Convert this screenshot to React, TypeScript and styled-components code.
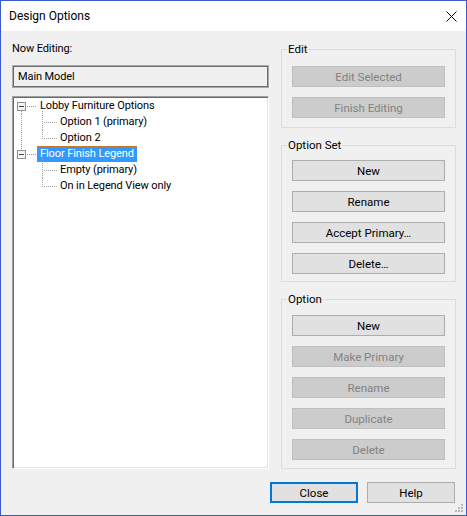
import React from 'react';
import styled, { createGlobalStyle } from 'styled-components';

const GlobalStyle = createGlobalStyle`
    html, body {
        margin: 0;
        padding: 0;
        background: #ffffff;
    }
`;

const Window = styled.div`
    position: relative;
    display: flex;
    flex-direction: column;
    width: 467px;
    height: 516px;
    box-sizing: border-box;
    border: 1px solid #3a5bcd;
    background: #f0f0f0;
    font-family: 'Segoe UI', Roboto, 'Liberation Sans', sans-serif;
    font-size: 11.5px;
    color: #000000;
`;

const TitleBar = styled.div`
    display: flex;
    flex-direction: row;
    justify-content: space-between;
    align-items: center;
    height: 30px;
    flex: none;
    padding-left: 8px;
    background: #ffffff;
`;

const Title = styled.span`
    font-size: 12px;
    line-height: 16px;
`;

const CloseBox = styled.div`
    display: flex;
    justify-content: center;
    align-items: center;
    width: 30px;
    height: 30px;
`;

const Body = styled.div`
    display: flex;
    flex-direction: column;
    padding: 10px 11px 0 11px;
`;

const Main = styled.div`
    display: grid;
    grid-template-columns: 257px 175px;
    column-gap: 12px;
`;

const LeftColumn = styled.div`
    display: flex;
    flex-direction: column;
    font-size: 11px;
    letter-spacing: -0.1px;
`;

const FieldLabel = styled.div`
    line-height: 16px;
    height: 16px;
`;

const ReadOnlyBox = styled.div`
    margin-top: 8px;
    height: 23px;
    box-sizing: border-box;
    border: 1px solid #a9a9a9;
    box-shadow: inset 0 0 0 1px #6d6d6d;
    padding: 0 4px 0 5px;
    display: flex;
    align-items: center;
    background: #f0f0f0;
`;

const TreeBox = styled.div`
    margin-top: 8px;
    height: 373px;
    box-sizing: border-box;
    border-style: solid;
    border-width: 1px;
    border-color: #a0a0a0 #ffffff #ffffff #a0a0a0;
    background: #ffffff;
    display: flex;
    flex-direction: column;
    box-shadow: inset 1px 1px 0 #696969, inset -1px -1px 0 #e3e3e3;
    padding: 1px;
`;

const TreeRow = styled.div`
    display: flex;
    flex-direction: row;
    align-items: center;
    height: 16px;
`;

const Lines = styled.svg`
    display: block;
    flex: none;
    overflow: visible;
`;

const NodeLabel = styled.span<{ $selected?: boolean }>`
    height: 16px;
    line-height: 14px;
    box-sizing: border-box;
    padding: 0 2px;
    white-space: nowrap;
    border: 1px dotted ${(props) => (props.$selected ? '#c8772c' : 'transparent')};
    background: ${(props) => (props.$selected ? '#3399ff' : 'transparent')};
    color: ${(props) => (props.$selected ? '#ffffff' : '#000000')};
`;

const RightColumn = styled.div`
    display: flex;
    flex-direction: column;
    gap: 9px;
`;

const Group = styled.fieldset`
    margin: 0;
    padding: 0;
    border: 1px solid #dcdcdc;
    min-width: 0;
`;

const Legend = styled.legend`
    margin-left: 5px;
    padding: 0 1px;
    line-height: 16px;
    height: 16px;
`;

const GroupContent = styled.div<{ $padTop: number; $padBottom: number }>`
    display: flex;
    flex-direction: column;
    gap: 10px;
    padding: ${(props) => props.$padTop}px 10px ${(props) => props.$padBottom}px 10px;
`;

const Button = styled.button<{ $focused?: boolean }>`
    height: 21px;
    box-sizing: border-box;
    margin: 0;
    padding: 0;
    font-family: inherit;
    font-size: 11.5px;
    line-height: 16px;
    background: #e1e1e1;
    border: 1px solid #adadad;
    color: #000000;
    border-radius: 0;

    &:disabled {
        background: #cccccc;
        border-color: #bfbfbf;
        color: #838383;
    }

    ${(props) => props.$focused && 'border: 2px solid #0078d7;'}
`;

const Footer = styled.div`
    display: flex;
    flex-direction: row;
    justify-content: flex-end;
    gap: 9px;
    margin-top: 13px;
`;

const FooterButton = styled(Button)`
    width: 88px;
`;

const Grip = styled.svg`
    position: absolute;
    right: 1px;
    bottom: 1px;
`;

const DOT = '#a0a0a0';

const RootLines = ({ first, last }: { first: boolean; last: boolean }) => (
    <Lines width={23} height={16} shapeRendering="crispEdges">
        {!first && <line x1={7.5} y1={0} x2={7.5} y2={4} stroke={DOT} strokeDasharray="1 1" />}
        {!last && <line x1={7.5} y1={13} x2={7.5} y2={16} stroke={DOT} strokeDasharray="1 1" />}
        <line x1={13} y1={8.5} x2={23} y2={8.5} stroke={DOT} strokeDasharray="1 1" />
        <rect x={3.5} y={4.5} width={8} height={8} fill="#f4f4f4" stroke="#8f8f8f" />
        <line x1={5} y1={8.5} x2={10} y2={8.5} stroke="#3a4656" />
    </Lines>
);

const ChildLines = ({ parentLast, first, last }: { parentLast: boolean; first: boolean; last: boolean }) => (
    <Lines width={43} height={16} shapeRendering="crispEdges">
        {!parentLast && <line x1={7.5} y1={0} x2={7.5} y2={16} stroke={DOT} strokeDasharray="1 1" />}
        <line x1={28.5} y1={first ? -3 : 0} x2={28.5} y2={last ? 9 : 16} stroke={DOT} strokeDasharray="1 1" />
        <line x1={30} y1={8.5} x2={43} y2={8.5} stroke={DOT} strokeDasharray="1 1" />
    </Lines>
);

const tree = [
    { label: 'Lobby Furniture Options', selected: false, children: ['Option 1 (primary)', 'Option 2'] },
    { label: 'Floor Finish Legend', selected: true, children: ['Empty (primary)', 'On in Legend View only'] },
];

const groups = [
    {
        title: 'Edit',
        padTop: 9,
        padBottom: 9,
        buttons: [
            { label: 'Edit Selected', enabled: false },
            { label: 'Finish Editing', enabled: false },
        ],
    },
    {
        title: 'Option Set',
        padTop: 7,
        padBottom: 7,
        buttons: [
            { label: 'New', enabled: true },
            { label: 'Rename', enabled: true },
            { label: 'Accept Primary…', enabled: true },
            { label: 'Delete…', enabled: true },
        ],
    },
    {
        title: 'Option',
        padTop: 8,
        padBottom: 8,
        buttons: [
            { label: 'New', enabled: true },
            { label: 'Make Primary', enabled: false },
            { label: 'Rename', enabled: false },
            { label: 'Duplicate', enabled: false },
            { label: 'Delete', enabled: false },
        ],
    },
];

const App = () => {
    return (
        <>
            <GlobalStyle />
            <Window>
                <TitleBar>
                    <Title>Design Options</Title>
                    <CloseBox>
                        <svg width="11" height="11" viewBox="0 0 11 11">
                            <path d="M0.5 0.5 L10.5 10.5 M10.5 0.5 L0.5 10.5" stroke="#000" strokeWidth="1" fill="none" />
                        </svg>
                    </CloseBox>
                </TitleBar>
                <Body>
                    <Main>
                        <LeftColumn>
                            <FieldLabel>Now Editing:</FieldLabel>
                            <ReadOnlyBox>Main Model</ReadOnlyBox>
                            <TreeBox>
                                {tree.map((node, i) => (
                                    <React.Fragment key={node.label}>
                                        <TreeRow>
                                            <RootLines first={i === 0} last={i === tree.length - 1} />
                                            <NodeLabel $selected={node.selected}>{node.label}</NodeLabel>
                                        </TreeRow>
                                        {node.children.map((child, j) => (
                                            <TreeRow key={child}>
                                                <ChildLines
                                                    parentLast={i === tree.length - 1}
                                                    first={j === 0}
                                                    last={j === node.children.length - 1}
                                                />
                                                <NodeLabel>{child}</NodeLabel>
                                            </TreeRow>
                                        ))}
                                    </React.Fragment>
                                ))}
                            </TreeBox>
                        </LeftColumn>
                        <RightColumn>
                            {groups.map((group) => (
                                <Group key={group.title}>
                                    <Legend>{group.title}</Legend>
                                    <GroupContent $padTop={group.padTop} $padBottom={group.padBottom}>
                                        {group.buttons.map((b) => (
                                            <Button key={b.label} type="button" disabled={!b.enabled}>
                                                {b.label}
                                            </Button>
                                        ))}
                                    </GroupContent>
                                </Group>
                            ))}
                        </RightColumn>
                    </Main>
                    <Footer>
                        <FooterButton type="button" $focused>
                            Close
                        </FooterButton>
                        <FooterButton type="button">Help</FooterButton>
                    </Footer>
                </Body>
                <Grip width="12" height="12" viewBox="0 0 12 12">
                    <rect x="8" y="2" width="2" height="2" fill="#b8b8b8" />
                    <rect x="5" y="5" width="2" height="2" fill="#b8b8b8" />
                    <rect x="8" y="5" width="2" height="2" fill="#b8b8b8" />
                    <rect x="2" y="8" width="2" height="2" fill="#b8b8b8" />
                    <rect x="5" y="8" width="2" height="2" fill="#b8b8b8" />
                    <rect x="8" y="8" width="2" height="2" fill="#b8b8b8" />
                </Grip>
            </Window>
        </>
    );
};

export default App;
